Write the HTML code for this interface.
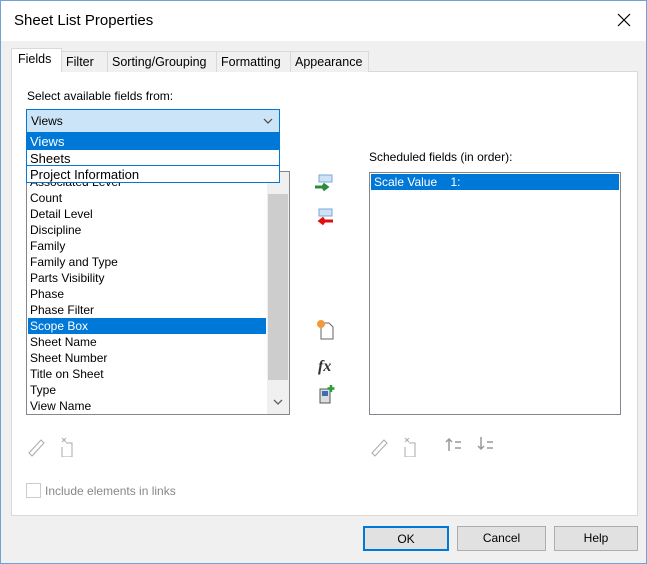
<!DOCTYPE html>
<html><head><style>
*{margin:0;padding:0;box-sizing:border-box}
body{width:647px;height:564px;overflow:hidden;font-family:"Liberation Sans",sans-serif;font-size:12px;color:#000;background:#fff}
.win{position:absolute;left:0;top:0;width:647px;height:564px;border:1px solid #6fa3d6;background:#f0f0f0}
.title{position:absolute;left:0;top:0;width:645px;height:40px;background:#fff;font-size:15px;padding:11px 13px}
.abs{position:absolute}
.tab{position:absolute;top:50px;height:21px;border:1px solid #d9d9d9;border-bottom:none;background:#f0f0f0;padding:3px 4px;font-size:12.5px}
.panel{position:absolute;left:10px;top:70px;width:627px;height:445px;background:#fff;border:1px solid #d9d9d9}
.item{position:absolute;left:1px;height:16px;line-height:16px;padding-left:2px;width:238px}
.btn{position:absolute;top:525px;height:25px;border:1px solid #adadad;background:#e1e1e1;text-align:center;line-height:23px}
</style></head><body><div class="win">
<div class="title">Sheet List Properties</div>
<svg class="abs" style="left:616px;top:12px" width="14" height="14"><path d="M1 1l12 12M13 1L1 13" stroke="#000" stroke-width="1.2"/></svg>
<div class="panel"></div>
<div class="tab" style="left:60px;width:47px">Filter</div>
<div class="tab" style="left:106px;width:110px">Sorting/Grouping</div>
<div class="tab" style="left:215px;width:75px">Formatting</div>
<div class="tab" style="left:289px;width:79px">Appearance</div>
<div class="tab" style="left:10px;top:47px;width:51px;height:24px;background:#fff;padding:3px 6px">Fields</div>
<div class="abs" style="left:26px;top:88px">Select available fields from:</div>

<div class="abs" style="left:25px;top:170px;width:264px;height:244px;border:1px solid #828790;background:#fff">
<div class="item" style="top:2px">Associated Level</div>
<div class="item" style="top:18px">Count</div>
<div class="item" style="top:34px">Detail Level</div>
<div class="item" style="top:50px">Discipline</div>
<div class="item" style="top:66px">Family</div>
<div class="item" style="top:82px">Family and Type</div>
<div class="item" style="top:98px">Parts Visibility</div>
<div class="item" style="top:114px">Phase</div>
<div class="item" style="top:130px">Phase Filter</div>
<div class="item" style="top:146px;background:#0078d7;color:#fff">Scope Box</div>
<div class="item" style="top:162px">Sheet Name</div>
<div class="item" style="top:178px">Sheet Number</div>
<div class="item" style="top:194px">Title on Sheet</div>
<div class="item" style="top:210px">Type</div>
<div class="item" style="top:226px">View Name</div>
<div class="abs" style="left:240px;top:0;width:22px;height:242px;background:#f0f0f0">
<div class="abs" style="left:1px;top:22px;width:20px;height:186px;background:#cdcdcd"></div>
<svg class="abs" style="left:6px;top:226px" width="10" height="8"><path d="M1 2l4 4 4-4" stroke="#606060" fill="none" stroke-width="1.3"/></svg>
</div></div>

<div class="abs" style="left:25px;top:108px;width:254px;height:24px;border:1px solid #0078d7;background:#cce4f7;padding:4px 4px">Views<svg class="abs" style="right:6px;top:8px" width="10" height="7"><path d="M1 1l4 4 4-4" stroke="#444" fill="none" stroke-width="1.2"/></svg></div>
<div class="abs" style="left:25px;top:131px;width:254px;height:51px;border:1px solid #0078d7;background:#fff">
<div class="abs" style="left:0;top:0;width:252px;height:17px;background:#0078d7;color:#fff;padding:1px 3px;font-size:13px">Views</div>
<div class="abs" style="left:0;top:17px;width:252px;height:16px;border-bottom:1px solid #0078d7;padding:1px 3px;font-size:13px">Sheets</div>
<div class="abs" style="left:0;top:33px;width:252px;height:16px;padding:1px 3px;font-size:13px">Project Information</div>
</div>

<div class="abs" style="left:368px;top:149px">Scheduled fields (in order):</div>
<div class="abs" style="left:368px;top:171px;width:252px;height:243px;border:1px solid #828790;background:#fff">
<div class="abs" style="left:1px;top:1px;width:248px;height:16px;background:#0078d7;color:#fff;padding:1px 3px">Scale Value&nbsp;&nbsp;&nbsp;&nbsp;1:</div></div>

<svg class="abs" style="left:312px;top:172px" width="24" height="240">
<rect x="6" y="2" width="13" height="7" fill="#cfe3f7" stroke="#7aa7d8"/><path d="M2 14h12M10 11l4 3-4 3" stroke="#2e8b3e" stroke-width="3" fill="none"/>
<rect x="6" y="36" width="13" height="7" fill="#cfe3f7" stroke="#7aa7d8"/><path d="M20 48H8M11 45l-4 3 4 3" stroke="#e01010" stroke-width="3" fill="none"/>
<path d="M8 150h8l4 4v12H8z" fill="#fff" stroke="#666"/><circle cx="8" cy="151" r="4" fill="#f29a3a"/>
<text x="5" y="198" font-family="Liberation Serif" font-style="italic" font-weight="bold" font-size="16" fill="#333">fx</text>
<rect x="7" y="216" width="10" height="14" fill="#ddd" stroke="#555"/><rect x="9" y="218" width="6" height="5" fill="#3b6fb6"/><path d="M18 212v7M14.5 215.5h7" stroke="#2a9d3a" stroke-width="2.5"/>
</svg>
<svg class="abs" style="left:25px;top:432px" width="60" height="24" fill="none" stroke="#aaa"><path d="M3 20l12-13 3 3-12 13z"/><path d="M36 5l4 4M40 5l-4 4"/><path d="M40 10h6v14H36v-10"/></svg>
<svg class="abs" style="left:368px;top:432px" width="140" height="24" fill="none" stroke="#aaa"><path d="M3 20l12-13 3 3-12 13z"/><path d="M36 5l4 4M40 5l-4 4"/><path d="M40 10h6v14H36v-10"/><path d="M80 18V6M77 9l3-3 3 3M86 9h6M86 15h6" stroke="#999" stroke-width="1.5"/><path d="M112 4v12M109 13l3 3 3-3M118 9h6M118 15h6" stroke="#999" stroke-width="1.5"/></svg>
<div class="abs" style="left:25px;top:482px;width:15px;height:15px;border:1px solid #ccc;background:#fff"></div>
<div class="abs" style="left:44px;top:483px;color:#888">Include elements in links</div>
<div class="btn" style="left:362px;width:86px;border:2px solid #0078d7">OK</div>
<div class="btn" style="left:456px;width:89px">Cancel</div>
<div class="btn" style="left:553px;width:84px">Help</div>
</div></body></html>
